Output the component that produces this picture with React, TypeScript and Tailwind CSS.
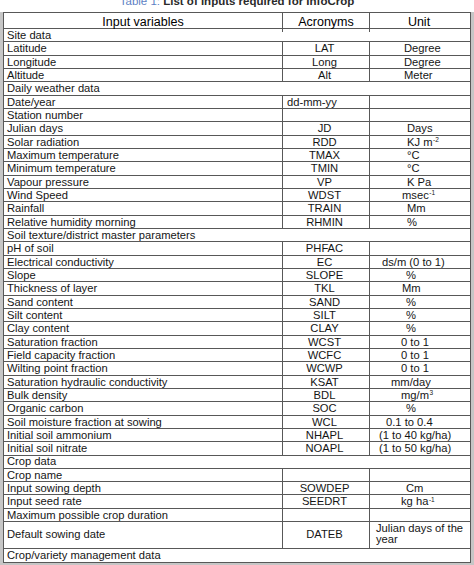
import React from "react";

type Row =
  | { kind: "section"; label: string }
  | { kind: "item"; label: string; acr?: string; acrLeft?: boolean; unit?: React.ReactNode; unitPl?: number; tall?: boolean };

const sup = (base: string, s: string) => (
  <>
    {base}
    <sup className="text-[6.5px] relative -top-[3.5px] ml-[0.5px]">{s}</sup>
  </>
);

const rows: Row[] = [
  { kind: "section", label: "Site data" },
  { kind: "item", label: "Latitude", acr: "LAT", unit: "Degree", unitPl: 34 },
  { kind: "item", label: "Longitude", acr: "Long", unit: "Degree", unitPl: 34 },
  { kind: "item", label: "Altitude", acr: "Alt", unit: "Meter", unitPl: 34 },
  { kind: "section", label: "Daily weather data" },
  { kind: "item", label: "Date/year", acr: "dd-mm-yy", acrLeft: true },
  { kind: "item", label: "Station number" },
  { kind: "item", label: "Julian days", acr: "JD", unit: "Days", unitPl: 37 },
  { kind: "item", label: "Solar radiation", acr: "RDD", unit: sup("KJ m", "-2"), unitPl: 37 },
  { kind: "item", label: "Maximum temperature", acr: "TMAX", unit: "°C", unitPl: 37 },
  { kind: "item", label: "Minimum temperature", acr: "TMIN", unit: "°C", unitPl: 37 },
  { kind: "item", label: "Vapour pressure", acr: "VP", unit: "K Pa", unitPl: 37 },
  { kind: "item", label: "Wind Speed", acr: "WDST", unit: sup("msec", "-1"), unitPl: 32 },
  { kind: "item", label: "Rainfall", acr: "TRAIN", unit: "Mm", unitPl: 37 },
  { kind: "item", label: "Relative humidity morning", acr: "RHMIN", unit: "%", unitPl: 37 },
  { kind: "section", label: "Soil texture/district master parameters" },
  { kind: "item", label: "pH of soil", acr: "PHFAC" },
  { kind: "item", label: "Electrical conductivity", acr: "EC", unit: "ds/m (0 to 1)", unitPl: 12 },
  { kind: "item", label: "Slope", acr: "SLOPE", unit: "%", unitPl: 36 },
  { kind: "item", label: "Thickness of layer", acr: "TKL", unit: "Mm", unitPl: 32 },
  { kind: "item", label: "Sand content", acr: "SAND", unit: "%", unitPl: 36 },
  { kind: "item", label: "Silt content", acr: "SILT", unit: "%", unitPl: 36 },
  { kind: "item", label: "Clay content", acr: "CLAY", unit: "%", unitPl: 36 },
  { kind: "item", label: "Saturation fraction", acr: "WCST", unit: "0 to 1", unitPl: 31 },
  { kind: "item", label: "Field capacity fraction", acr: "WCFC", unit: "0 to 1", unitPl: 31 },
  { kind: "item", label: "Wilting point fraction", acr: "WCWP", unit: "0 to 1", unitPl: 31 },
  { kind: "item", label: "Saturation hydraulic conductivity", acr: "KSAT", unit: "mm/day", unitPl: 21 },
  { kind: "item", label: "Bulk density", acr: "BDL", unit: sup("mg/m", "3"), unitPl: 31 },
  { kind: "item", label: "Organic carbon", acr: "SOC", unit: "%", unitPl: 36 },
  { kind: "item", label: "Soil moisture fraction at sowing", acr: "WCL", unit: "0.1 to 0.4", unitPl: 16 },
  { kind: "item", label: "Initial soil ammonium", acr: "NHAPL", unit: "(1 to 40 kg/ha)", unitPl: 9 },
  { kind: "item", label: "Initial soil nitrate", acr: "NOAPL", unit: "(1 to 50 kg/ha)", unitPl: 9 },
  { kind: "section", label: "Crop data" },
  { kind: "item", label: "Crop name" },
  { kind: "item", label: "Input sowing depth", acr: "SOWDEP", unit: "Cm", unitPl: 36 },
  { kind: "item", label: "Input seed rate", acr: "SEEDRT", unit: sup("kg ha", "-1"), unitPl: 31 },
  { kind: "item", label: "Maximum possible crop duration" },
  { kind: "item", label: "Default sowing date", acr: "DATEB", unit: "Julian days of the year", unitPl: 6, tall: true },
  { kind: "section", label: "Crop/variety management data" },
];

export default function App() {
  return (
    <div
      className="w-[474px] h-[565px] overflow-hidden bg-white text-[#151515]"
      style={{ fontFamily: '"Liberation Sans", Arial, sans-serif' }}
    >
      {/* caption, cut off at the top like the scan */}
      <div className="h-[12px] overflow-hidden">
        <div className="-mt-[5.5px] leading-[12px] text-[11.5px] text-center whitespace-nowrap">
          <span className="text-[#5d7fc4]">Table 1:</span>{" "}
          <span className="font-bold text-[#2a2a2a]">List of inputs required for InfoCrop</span>
        </div>
      </div>

      <div className="border-l-[3px] border-r-[3px] border-b-[3px] border-[#c6c6c6]">
        <div className="border border-[#585858]">
          {/* header */}
          <div className="grid grid-cols-[278px_87px_99px] h-[16px] border-b border-[#585858] text-[12.5px] text-black">
            <div className="flex items-center justify-center">Input variables</div>
            <div className="flex items-center justify-center border-l border-[#585858]">Acronyms</div>
            <div className="flex items-center justify-center border-l border-[#585858]">Unit</div>
          </div>

          {rows.map((r, i) => {
            const last = i === rows.length - 1;
            if (r.kind === "section") {
              return (
                <div
                  key={i}
                  className={`h-[13.33px] flex items-center pl-[3px] text-[11.2px] leading-[13px] ${last ? "" : "border-b border-[#585858]"}`}
                >
                  {r.label}
                </div>
              );
            }
            return (
              <div
                key={i}
                className={`grid grid-cols-[278px_87px_99px] text-[11.2px] border-b border-[#585858] ${r.tall ? "h-[26.5px]" : "h-[13.33px]"}`}
              >
                <div className="flex items-center pl-[3px] leading-[13px] whitespace-nowrap">{r.label}</div>
                <div
                  className={`flex items-center border-l border-[#585858] leading-[13px] whitespace-nowrap ${r.acrLeft ? "pl-[4px]" : "justify-center pr-[3px]"}`}
                >
                  {r.acr}
                </div>
                <div
                  className={`flex items-center border-l border-[#585858] ${r.tall ? "leading-[11px] pb-[1px]" : "leading-[13px] whitespace-nowrap"}`}
                  style={{ paddingLeft: r.unitPl ?? 0 }}
                >
                  <span>{r.unit}</span>
                </div>
              </div>
            );
          })}
        </div>
      </div>
    </div>
  );
}
